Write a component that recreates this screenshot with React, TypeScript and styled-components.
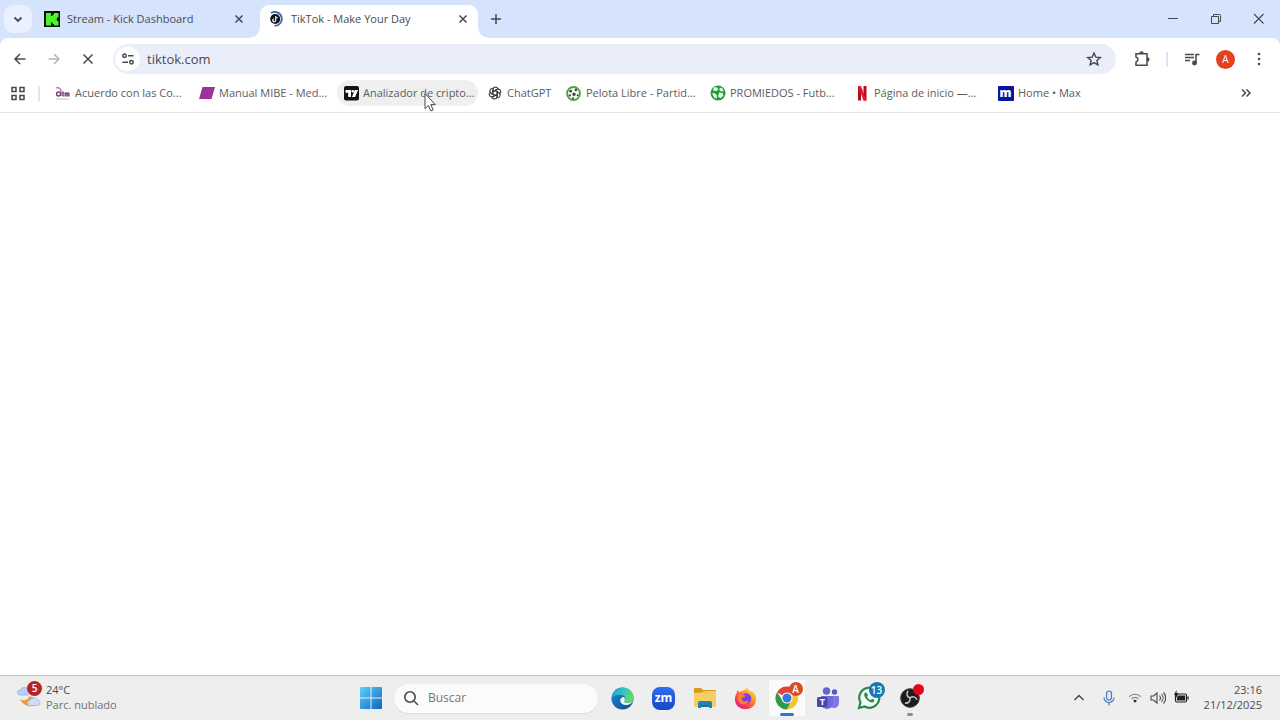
import React from "react";
import styled, { createGlobalStyle } from "styled-components";

const GlobalStyle = createGlobalStyle`
  * { box-sizing: border-box; }
  html, body, #root { height: 100%; }
  body {
    margin: 0;
    background: #fff;
    color: #4a4c4f;
    font-family: "Open Sans", "Noto Sans", sans-serif;
    font-size: 11px;
    line-height: 16px;
  }
  button, input { font: inherit; color: inherit; }
  button { border: 0; padding: 0; background: none; }
  svg { display: block; flex: none; }
`;

const Desktop = styled.div`
  display: flex;
  flex-direction: column;
  min-height: 100%;
`;

/* ---------- tab strip ---------- */

const TabStrip = styled.header`
  display: flex;
  height: 38px;
  padding-left: 4px;
  background: #d5e3fd;
`;

const TabSearch = styled.button`
  display: grid;
  place-items: center;
  width: 28px;
  height: 28px;
  margin: 5px 4px 0 0;
  border-radius: 9px;
  background: #e9f1fe;
`;

const Tab = styled.div<{ $active?: boolean }>`
  position: relative;
  display: flex;
  align-items: center;
  gap: 7px;
  width: 218px;
  height: 33px;
  margin: 5px ${(p) => (p.$active ? 0 : 6)}px 0 0;
  padding: 0 7px 5px 8px;
  border-radius: 9px 9px 0 0;
  background: ${(p) => (p.$active ? "#fff" : "transparent")};

  &::before, &::after {
    content: ${(p) => (p.$active ? '""' : "none")};
    position: absolute;
    bottom: 0;
    width: 10px;
    height: 10px;
  }
  &::before {
    left: -10px;
    background: radial-gradient(circle at 0 0, transparent 9px, #fff 10px);
  }
  &::after {
    right: -10px;
    background: radial-gradient(circle at 100% 0, transparent 9px, #fff 10px);
  }
`;

const TabTitle = styled.button`
  flex: 1;
  text-align: left;
  white-space: nowrap;
`;

const SmallButton = styled.button`
  display: grid;
  place-items: center;
  width: 16px;
  height: 16px;
`;

const NewTab = styled(SmallButton)`
  margin: 11px 0 0 10px;
`;

const WindowControls = styled.div`
  display: flex;
  margin-left: auto;
`;

const WindowButton = styled.button`
  display: grid;
  place-items: center;
  width: 43px;
  height: 38px;
`;

/* ---------- toolbar ---------- */

const ToolbarWrap = styled.div`
  background: #d5e3fd;
`;

const Toolbar = styled.nav`
  display: flex;
  align-items: center;
  height: 42px;
  padding: 0 10px 0 9px;
  border-radius: 8px 8px 0 0;
  background: #fff;
`;

const NavButtons = styled.div`
  display: flex;
  gap: 12px;
  margin-right: 14px;
`;

const IconButton = styled.button`
  display: grid;
  place-items: center;
  width: 22px;
  height: 22px;
`;

const Omnibox = styled.div`
  display: flex;
  flex: 1;
  align-items: center;
  gap: 7px;
  height: 30px;
  padding: 0 14px 0 2px;
  border-radius: 15px;
  background: #e9eefa;
`;

const SiteInfo = styled.button`
  display: grid;
  place-items: center;
  width: 25px;
  height: 24px;
  border-radius: 12px;
  background: #fff;
`;

const Address = styled.input`
  flex: 1;
  min-width: 0;
  padding: 0;
  border: 0;
  outline: 0;
  background: none;
  font-size: 13px;
  line-height: 18px;
`;

const ToolbarActions = styled.div`
  display: flex;
  align-items: center;
  margin-left: 15px;
`;

const Divider = styled.span<{ $gap: number }>`
  width: 2px;
  height: 15px;
  margin: 0 ${(p) => p.$gap}px;
  background: #dbe5f5;
`;

const Avatar = styled.button`
  width: 19px;
  height: 19px;
  margin: 0 13px;
  border-radius: 50%;
  background: #e5401f;
  color: #fff;
  font-size: 10px;
  line-height: 19px;
`;

/* ---------- bookmarks ---------- */

const Bookmarks = styled.nav`
  display: flex;
  align-items: center;
  height: 33px;
  padding: 0 23px 6px 7px;
  border-bottom: 1px solid #e4e4e6;
  background: #fff;
`;

const BookmarkList = styled.div`
  display: flex;
  flex: 1;
  gap: 3px;
`;

const Bookmark = styled.a<{ $short?: boolean; $hover?: boolean }>`
  display: flex;
  align-items: center;
  gap: 4px;
  width: ${(p) => (p.$short ? "76px" : "141px")};
  height: 26px;
  padding-left: 5px;
  border-radius: 13px;
  background: ${(p) => (p.$hover ? "#efeff0" : "transparent")};
  color: #5b5d60;
  text-decoration: none;
  white-space: nowrap;
`;

const BookmarkIcon = styled.span`
  display: grid;
  flex: none;
  place-items: center;
  width: 17px;
  height: 16px;
`;

const LetterIcon = styled.span`
  width: 16px;
  height: 15px;
  border-radius: 1px;
  background: #0a13a0;
  color: #fff;
  font-size: 12px;
  font-weight: 800;
  line-height: 13px;
  text-align: center;
`;

const PageView = styled.main`
  flex: 1;
  background: #fff;
`;

const Pointer = styled.svg`
  position: absolute;
  left: 423px;
  top: 92px;
`;

/* ---------- taskbar ---------- */

const Taskbar = styled.footer`
  display: grid;
  grid-template-columns: 1fr auto 1fr;
  align-items: center;
  height: 45px;
  border-top: 1px solid #c2c2c4;
  background: #eeeeee;
`;

const Weather = styled.button`
  display: flex;
  align-items: center;
  gap: 4px;
  padding: 0 0 2px 16px;
  text-align: left;
  line-height: 15px;
`;

const WeatherIcon = styled.span`
  position: relative;
`;

const Muted = styled.span`
  display: block;
  color: #707174;
`;

const Badge = styled.span<{ $bg: string; $size: number; $right?: number }>`
  position: absolute;
  top: -4px;
  right: ${(p) => p.$right ?? -4}px;
  width: ${(p) => p.$size}px;
  height: ${(p) => p.$size}px;
  border-radius: 50%;
  background: ${(p) => p.$bg};
  color: #fff;
  font-size: 10px;
  font-weight: 600;
  line-height: ${(p) => p.$size}px;
  text-align: center;
`;

const Dock = styled.div`
  display: flex;
  align-items: center;
`;

const DockButton = styled.button<{ $active?: boolean }>`
  position: relative;
  display: grid;
  place-items: center;
  width: 41px;
  height: 36px;
  border-radius: 4px;
  background: ${(p) => (p.$active ? "linear-gradient(#fafafa, #fafafa) center / 36px 36px no-repeat" : "none")};
`;

const DockIcon = styled.span`
  position: relative;
`;

const Running = styled.span<{ $active?: boolean }>`
  position: absolute;
  bottom: 0;
  left: 50%;
  width: ${(p) => (p.$active ? 14 : 6)}px;
  height: 3px;
  border-radius: 2px;
  background: ${(p) => (p.$active ? "#2f78c4" : "#8c8c8c")};
  transform: translateX(-50%);
`;

const ZoomIcon = styled.span`
  width: 23px;
  height: 23px;
  border-radius: 8px;
  background: linear-gradient(#2f6cf0, #1746c4);
  color: #fff;
  font-size: 12px;
  font-weight: 700;
  line-height: 21px;
  text-align: center;
`;

const SearchBox = styled.label`
  display: flex;
  align-items: center;
  gap: 9px;
  width: 204px;
  height: 29px;
  margin: 0 4px 0 3px;
  padding: 0 9px;
  border-radius: 15px;
  background: #fbfbfb;
  box-shadow: 0 1px 1px #dadada;
`;

const SearchInput = styled.input`
  flex: 1;
  min-width: 0;
  padding: 0;
  border: 0;
  outline: 0;
  background: none;
  font-size: 12px;
  &::placeholder { color: #747578; opacity: 1; }
`;

const Tray = styled.div`
  display: flex;
  align-items: center;
  justify-content: flex-end;
  padding-right: 18px;
`;

const TrayButton = styled.button<{ $wide?: boolean }>`
  display: grid;
  place-items: center;
  width: ${(p) => (p.$wide ? 30 : 23)}px;
  height: 30px;
`;

const Clock = styled.button`
  margin-left: 11px;
  padding-bottom: 2px;
  text-align: right;
  line-height: 15px;
`;

/* ---------- drawings ---------- */

type LineProps = { size?: number; w?: number; color?: string; children: React.ReactNode };
const Line = ({ size = 16, w = 1.5, color = "#46494d", children }: LineProps) => (
  <svg width={size} height={size} viewBox="0 0 16 16" fill="none" stroke={color} strokeWidth={w} aria-hidden="true">
    {children}
  </svg>
);

const Close = () => <Line><path d="M4.5 4.5l7 7M11.5 4.5l-7 7" /></Line>;

const KickLogo = () => (
  <svg width="16" height="16" viewBox="0 0 16 16">
    <rect width="16" height="16" fill="#071006" />
    <path
      d="M2 2h5v3h1.500V3.500H10V2h4.500v4.500H13V8h-1.500v.5H13V10h1.500v4.500H10V13H8.500v-1.500H7v3H2z"
      fill="#4cf52b"
    />
  </svg>
);

const TikTokLoading = () => (
  <svg width="16" height="16" viewBox="0 0 16 16" fill="none">
    <circle cx="7.200" cy="8" r="5" fill="#111216" />
    <path d="M3 2A7 7 0 1 1 6.500 14.900" stroke="#3c63b4" strokeWidth="1.800" />
    <path d="M7.700 5v4.300a1.500 1.500 0 1 1-1.600-1.500M7.700 5c.2 1.200 1 1.800 2 1.900" stroke="#dfeaf0" strokeWidth="1.300" />
  </svg>
);

const AlmLogo = () => (
  <svg width="15" height="15" viewBox="0 0 15 15" fill="none" stroke="#7b3c83" strokeWidth="1.5">
    <path d="M1 2c2-1 4 0 5 2v6" stroke="#a85fa8" strokeWidth="1.200" />
    <circle cx="3.600" cy="8" r="2" />
    <path d="M8 5.500V10.500M10.300 10.500V6.500M10.300 7.500q1-1 1.800 0V10.500M12.100 7.500q1-1 1.800 0V10.500" />
    <path d="M1 13h13" stroke="#dccfdc" />
  </svg>
);

const Parallelogram = () => (
  <svg width="16" height="16" viewBox="0 0 16 16"><path d="M3.500 2H16l-3.500 12H0z" fill="#a0309b" /></svg>
);

const TradingView = () => (
  <svg width="16" height="16" viewBox="0 0 16 16">
    <rect x="1" y="1" width="15" height="14.500" rx="2" fill="#111216" />
    <g fill="#fff">
      <path d="M2.500 5H8v7H5.200V7.800H2.500z" />
      <circle cx="9.800" cy="6.300" r="1.300" />
      <path d="M11.800 5H15l-2.900 7H8.900z" />
    </g>
  </svg>
);

const OpenAi = () => (
  <svg width="14" height="14" viewBox="0 0 16 16" fill="none" stroke="#3d3f41" strokeWidth="1.300">
    {[0, 60, 120, 180, 240, 300].map((a) => (
      <path key={a} transform={`rotate(${a} 8 8)`} d="M5.500 9.440V4.300a3.100 3.100 0 0 1 5.700-1.600M5.500 6.560L10 3.960a3.100 3.100 0 0 1 2.600-.2" />
    ))}
  </svg>
);

const Ball = () => (
  <svg width="15" height="15" viewBox="0 0 16 16">
    <circle cx="8" cy="8" r="6.900" fill="#f1f8ef" stroke="#5b9a50" strokeWidth="2" />
    <g fill="#33432f">
      <path d="M8.500 7l2 1.300-.7 2.200H7.300L6.500 8.300z" />
      <circle cx="5" cy="5.500" r="1.400" />
      <circle cx="10.500" cy="4.300" r="1.300" />
      <circle cx="4" cy="10" r="1.200" />
      <circle cx="7.500" cy="13" r="1.100" />
      <circle cx="12.500" cy="9.800" r="1.100" />
    </g>
  </svg>
);

const GreenBall = () => (
  <svg width="16" height="16" viewBox="0 0 16 16">
    <circle cx="8" cy="8" r="7.500" fill="#249c35" />
    <path d="M4.500 2l3 .8L8 5 5.500 6.300 2.800 5zM10 2.500l2.800 1.200.7 2.500-2.500.3-1.800-1.800zM9 7.500l3.500.5 1 2.500-2.500 2.500-3-1zM2 8.500l2.500-.5L7 10.500l-.5 3-2-.5z" fill="#eaf9ea" />
  </svg>
);

const NetflixRibbon = () => (
  <svg width="16" height="16" viewBox="0 0 16 16">
    <rect x="4" y="1" width="3" height="14.500" fill="#b20d1d" />
    <rect x="9.500" y="1" width="3" height="14.500" fill="#b20d1d" />
    <path d="M4 1h3l5.500 14.500h-3z" fill="#e01b2c" />
  </svg>
);

const Cloudy = () => (
  <svg width="26" height="24" viewBox="0 0 26 24">
    <path d="M4 10a2.500 2.500 0 0 1 0-5 5 5 0 0 1 8-1v6z" fill="#b9d0f2" stroke="#8fb0e0" strokeWidth=".8" />
    <path d="M4 14.500c5 2 8 0 9-3 6 0 9 4 8 7-5 5-13 3-17-4z" fill="#ee9a3c" />
    <path d="M14 20.500a2.600 2.600 0 0 1 0-5.200 4.200 4.200 0 0 1 7.200-.6 3 3 0 0 1 .8 5.800z" fill="#cfdcf4" stroke="#9bb5df" strokeWidth=".8" />
  </svg>
);

const WindowsLogo = () => (
  <svg width="22" height="22" viewBox="0 0 22 22">
    <defs>
      <linearGradient id="win" x1="0" y1="0" x2="1" y2="1">
        <stop offset="0" stopColor="#5fd0f8" /><stop offset="1" stopColor="#0a66c2" />
      </linearGradient>
    </defs>
    <path d="M0 1a1 1 0 0 1 1-1h9.500v10.500H0zM11.500 0H21a1 1 0 0 1 1 1v9.500H11.500zM0 11.500h10.500V22H1a1 1 0 0 1-1-1zM11.500 11.500H22V21a1 1 0 0 1-1 1h-9.500z" fill="url(#win)" />
  </svg>
);

const Edge = () => (
  <svg width="23" height="23" viewBox="0 0 24 24">
    <defs>
      <linearGradient id="edgeTop" x1="0" y1="0" x2="1" y2=".3">
        <stop offset="0" stopColor="#239fd2" /><stop offset=".6" stopColor="#36c5c4" /><stop offset="1" stopColor="#68d95f" />
      </linearGradient>
      <linearGradient id="edgeLow" x1="0" y1="0" x2="1" y2="1">
        <stop offset="0" stopColor="#1c8bd2" /><stop offset="1" stopColor="#114a8b" />
      </linearGradient>
    </defs>
    <circle cx="12" cy="12" r="11.500" fill="url(#edgeLow)" />
    <path d="M.6 11C2 3.800 7 .5 12 .5c7 0 11.500 5 11.500 10.300 0 4-3 6-6 6-2.500 0-4-.8-3.500-1.800 2-3 .5-7-4-7C5.500 8 2 9.500.6 11z" fill="url(#edgeTop)" />
    <path d="M13.500 10.500c-3 0-4.500 2.500-3.500 5 1 3 4.500 4 8 3 2-.5 3.500-1.500 4.500-3l1.500-3c-1.500 3-4 4.300-6.500 4.300s-4-.8-3.500-1.800c1-1.500.5-3.300-.5-4.500z" fill="#eef4f8" />
  </svg>
);

const Folder = () => (
  <svg width="24" height="22" viewBox="0 0 24 22">
    <path d="M1 2a1 1 0 0 1 1-1h6l2 2h12a1 1 0 0 1 1 1v4H1z" fill="#d99a1c" />
    <path d="M1 6l8-.5L11 4h11a1 1 0 0 1 1 1v14a1 1 0 0 1-1 1H2a1 1 0 0 1-1-1z" fill="#f6cf62" />
    <path d="M5 21v-5a2 2 0 0 1 2-2h10a2 2 0 0 1 2 2v5h-3v-3H8v3z" fill="#1c83bd" />
    <path d="M8 18h8v2H8z" fill="#2b6d91" />
  </svg>
);

const Firefox = () => (
  <svg width="23" height="23" viewBox="0 0 24 24">
    <defs>
      <linearGradient id="fox" x1=".9" y1=".1" x2=".2" y2="1">
        <stop offset="0" stopColor="#ffdf3f" /><stop offset=".4" stopColor="#ff8a28" /><stop offset=".75" stopColor="#fb3654" /><stop offset="1" stopColor="#d51f8b" />
      </linearGradient>
    </defs>
    <path d="M3 6l.5-3L6 5.500C7 4.500 8.500 4 9.500 4c1.500-.5 3-2 4-3.500.5 2 2.500 3 4 4.500l1-1c3.500 3 5 6 4.500 9.500C22.500 19.500 18 23 12 23S1 19 1 13c0-3 .8-5.200 2-7z" fill="url(#fox)" />
    <circle cx="12.500" cy="12" r="5.500" fill="#7c3ed8" />
    <path d="M4 9c2-2 4-2 6-1l2 1c-.5 1.500-2.500 1.500-3.500 2.500-.8 1 0 3.500 2.500 3.500s3-.8 4-.5c-1 3-4 4-6.500 3.500C5.500 17 3 13 4 9z" fill="#ff7a35" />
  </svg>
);

const Chrome = () => (
  <svg width="24" height="24" viewBox="0 0 24 24">
    <path d="M12 12L2.040 6.250A11.500 11.500 0 0 1 21.960 6.250L22 7H12z" fill="#df4434" />
    <path d="M12 7h10a11.500 11.500 0 0 1-10 16.500L16.300 14.500z" fill="#f6c62d" />
    <path d="M2.040 6.250A11.500 11.500 0 0 0 12 23.500l4.300-9-8.600 0z" fill="#2b9b4c" />
    <circle cx="12" cy="12" r="5.600" fill="#fff" />
    <circle cx="12" cy="12" r="4.500" fill="#3878dc" />
  </svg>
);

const Teams = () => (
  <svg width="22" height="22" viewBox="0 0 22 22">
    <circle cx="9.500" cy="4" r="3.700" fill="#6066ce" />
    <circle cx="17.500" cy="5" r="2.700" fill="#5359bd" />
    <path d="M14 9h7a1 1 0 0 1 1 1v6a5 5 0 0 1-8 4z" fill="#8178e8" />
    <path d="M4 9h11a1 1 0 0 1 1 1v6a6 6 0 0 1-12 0z" fill="#7168dc" />
    <rect y="10" width="10.500" height="10" rx="1.500" fill="#4548a6" />
    <text x="5.300" y="18" fill="#fff" fontSize="9" fontWeight="700" textAnchor="middle">T</text>
  </svg>
);

const WhatsApp = () => (
  <svg width="24" height="24" viewBox="0 0 24 24">
    <path d="M2 22l1.500-5.500A10 10 0 1 1 7.500 20.500z" fill="#f6fbf7" stroke="#258a50" strokeWidth="2.200" />
    <path d="M8.500 6.500c-2 1-1.800 4 1.500 7.200s6.500 3.500 7.300 1.300c.3-1-.3-1.500-2.300-2.200l-1.300 1.400c-1.700-.7-3-2-3.700-3.700l1-1.200c-.7-1.800-1.300-2.900-2.500-2.800z" fill="#258a50" />
  </svg>
);

const Obs = () => (
  <svg width="20" height="20" viewBox="0 0 20 20" fill="none">
    <circle cx="10" cy="10" r="9.300" fill="#1d1b1d" stroke="#3c3a3c" />
    {[0, 120, 240].map((a) => (
      <path key={a} transform={`rotate(${a} 10 10)`} d="M10 10c-3-1-4-4-2-7" stroke="#c9c7c9" strokeWidth="1.500" />
    ))}
  </svg>
);

const bookmarks: { label: string; icon: React.ReactNode; short?: boolean; hover?: boolean }[] = [
  { label: "Acuerdo con las Co...", icon: <AlmLogo /> },
  { label: "Manual MIBE - Med...", icon: <Parallelogram /> },
  { label: "Analizador de cripto...", icon: <TradingView />, hover: true },
  { label: "ChatGPT", icon: <OpenAi />, short: true },
  { label: "Pelota Libre - Partid...", icon: <Ball /> },
  { label: "PROMIEDOS - Futb...", icon: <GreenBall /> },
  { label: "Página de inicio —...", icon: <NetflixRibbon /> },
  { label: "Home • Max", icon: <LetterIcon>m</LetterIcon> },
];

export default function App() {
  return (
    <Desktop>
      <GlobalStyle />
      <TabStrip>
        <TabSearch aria-label="Buscar pestañas"><Line w={1.8}><path d="M4.500 6.500L8 10l3.500-3.500" /></Line></TabSearch>
        <Tab>
          <KickLogo />
          <TabTitle>Stream - Kick Dashboard</TabTitle>
          <SmallButton aria-label="Cerrar pestaña"><Close /></SmallButton>
        </Tab>
        <Tab $active>
          <TikTokLoading />
          <TabTitle>TikTok - Make Your Day</TabTitle>
          <SmallButton aria-label="Cerrar pestaña"><Close /></SmallButton>
        </Tab>
        <NewTab aria-label="Nueva pestaña"><Line><path d="M8 3v10M3 8h10" /></Line></NewTab>
        <WindowControls>
          <WindowButton aria-label="Minimizar"><Line w={1}><path d="M3 7.500h10" /></Line></WindowButton>
          <WindowButton aria-label="Restaurar"><Line w={1}><path d="M3.500 5.500h7v7h-7zM5.500 5.500v-2h6q1 0 1 1v6h-2" /></Line></WindowButton>
          <WindowButton aria-label="Cerrar"><Line w={1.1}><path d="M3 3l9.500 9.500M12.500 3l-9.500 9.500" /></Line></WindowButton>
        </WindowControls>
      </TabStrip>

      <ToolbarWrap>
        <Toolbar>
          <NavButtons>
            <IconButton aria-label="Atrás"><Line><path d="M13.500 8H3M8 3L3 8l5 5" /></Line></IconButton>
            <IconButton aria-label="Adelante"><Line color="#b4b6b9"><path d="M2.500 8H13M8 3l5 5-5 5" /></Line></IconButton>
            <IconButton aria-label="Detener"><Line><path d="M3.500 3.500l9 9M12.500 3.500l-9 9" /></Line></IconButton>
          </NavButtons>
          <Omnibox>
            <SiteInfo aria-label="Información del sitio">
              <Line><circle cx="4.500" cy="4.800" r="1.700" /><path d="M8 4.800h5.500M2.500 11.200H8" /><circle cx="11.500" cy="11.200" r="1.700" /></Line>
            </SiteInfo>
            <Address aria-label="Dirección" defaultValue="tiktok.com" />
            <SmallButton aria-label="Agregar a favoritos">
              <Line w={1.4}><path d="M8 2l1.800 4.100 4.500.4-3.400 3 1 4.400L8 11.600l-3.900 2.300 1-4.400-3.400-3 4.500-.4z" /></Line>
            </SmallButton>
          </Omnibox>
          <ToolbarActions>
            <IconButton aria-label="Extensiones">
              <Line><path d="M2 2.800h11v11.400H2v-3.200q2-.7 2-2.500T2 6z" /><path d="M6 2.500a1.500 1.500 0 0 1 3 0M13.300 7a1.500 1.500 0 0 1 0 3" fill="#46494d" /></Line>
            </IconButton>
            <Divider $gap={13} />
            <IconButton aria-label="Controles multimedia">
              <Line><path d="M1 3.500h9M1 6.500h9M1 9.500h5M12 12V3.500h3.500" /><circle cx="10.500" cy="12" r="1.700" fill="#46494d" /></Line>
            </IconButton>
            <Avatar aria-label="Perfil">A</Avatar>
            <IconButton aria-label="Menú"><Line w={0}><g fill="#46494d"><circle cx="8" cy="3" r="1.300" /><circle cx="8" cy="8" r="1.300" /><circle cx="8" cy="13" r="1.300" /></g></Line></IconButton>
          </ToolbarActions>
        </Toolbar>
      </ToolbarWrap>

      <Bookmarks>
        <IconButton aria-label="Aplicaciones">
          <Line><path d="M2 2.500h4v4H2zM10 2.500h4v4h-4zM2 10.500h4v4H2zM10 10.500h4v4h-4z" /></Line>
        </IconButton>
        <Divider $gap={9} />
        <BookmarkList>
          {bookmarks.map((b) => (
            <Bookmark key={b.label} href="#" $short={b.short} $hover={b.hover}>
              <BookmarkIcon>{b.icon}</BookmarkIcon>
              {b.label}
            </Bookmark>
          ))}
        </BookmarkList>
        <IconButton aria-label="Más favoritos"><Line><path d="M4 4.500L7.500 8 4 11.500M8.500 4.500L12 8l-3.500 3.500" /></Line></IconButton>
      </Bookmarks>

      <PageView />

      <Taskbar>
        <Weather>
          <WeatherIcon>
            <Cloudy />
            <Badge $bg="#b3232a" $size={15} $right={0}>5</Badge>
          </WeatherIcon>
          <span>24°C<Muted>Parc. nublado</Muted></span>
        </Weather>
        <Dock>
          <DockButton aria-label="Inicio"><WindowsLogo /></DockButton>
          <SearchBox>
            <Line w={1.6}><circle cx="7" cy="7" r="5.200" /><path d="M11 11l4 4" /></Line>
            <SearchInput aria-label="Buscar" placeholder="Buscar" />
          </SearchBox>
          <DockButton aria-label="Edge"><Edge /></DockButton>
          <DockButton aria-label="Zoom"><ZoomIcon>zm</ZoomIcon></DockButton>
          <DockButton aria-label="Explorador"><Folder /></DockButton>
          <DockButton aria-label="Firefox"><Firefox /></DockButton>
          <DockButton aria-label="Chrome" $active>
            <DockIcon><Chrome /><Badge $bg="#dc4a28" $size={14}>A</Badge></DockIcon>
            <Running $active />
          </DockButton>
          <DockButton aria-label="Teams"><Teams /></DockButton>
          <DockButton aria-label="WhatsApp"><DockIcon><WhatsApp /><Badge $bg="#1479b8" $size={16}>13</Badge></DockIcon></DockButton>
          <DockButton aria-label="OBS">
            <DockIcon><Obs /><Badge $bg="#e3061a" $size={11} /></DockIcon>
            <Running />
          </DockButton>
        </Dock>
        <Tray>
          <TrayButton $wide aria-label="Iconos ocultos"><Line><path d="M3.500 10L8 5.500l4.500 4.500" /></Line></TrayButton>
          <TrayButton $wide aria-label="Micrófono">
            <Line color="#4a80bd" w={1.2}><rect x="5.500" y="1" width="5" height="9" rx="2.500" fill="#dbe9f8" /><path d="M3 7.500a5 5 0 0 0 10 0M8 12.500V15.500" /></Line>
          </TrayButton>
          <TrayButton aria-label="Red">
            <Line size={14} w={1.3} color="#77797b"><path d="M1.500 6.500a9 9 0 0 1 13 0M4 9a6 6 0 0 1 8 0" /><path d="M5.800 11a3.500 3.500 0 0 1 4.400 0L8 13.500z" fill="#303234" stroke="none" /></Line>
          </TrayButton>
          <TrayButton aria-label="Volumen">
            <Line w={1.1}><path d="M1 6v4h2.500L7 13V3L3.500 6zM9.500 5.500a4 4 0 0 1 0 5M11.500 4a6 6 0 0 1 0 8M13.500 2.500a8 8 0 0 1 0 11" /></Line>
          </TrayButton>
          <TrayButton aria-label="Batería">
            <Line w={1.2} color="#1f2021"><rect x="2.500" y="4" width="11" height="8" rx="1.500" /><path d="M5 6h6.500v4H4.500z" fill="#1f2021" /><path d="M15 6.500v3" /><path d="M3.500 0L1 5h2v3l2.500-5h-2z" fill="#1f2021" stroke="none" /></Line>
          </TrayButton>
          <Clock>23:16<br />21/12/2025</Clock>
        </Tray>
      </Taskbar>

      <Pointer width="14" height="21" viewBox="0 0 14 21" aria-hidden="true">
        <path d="M2 1.500v15.200l3.400-3.200 2.400 5.400 2.400-1-2.400-5.300h4.500z" fill="#fff" stroke="#46484b" />
      </Pointer>
    </Desktop>
  );
}
